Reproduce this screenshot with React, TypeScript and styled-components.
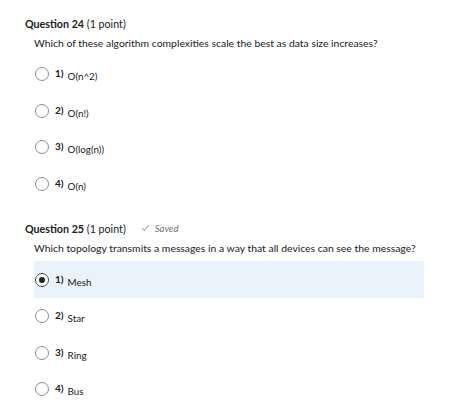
import styled, { createGlobalStyle } from "styled-components";

const GlobalStyle = createGlobalStyle`
  html, body {
    margin: 0;
    padding: 0;
    background: #ffffff;
  }
  body {
    font-family: Lato, "Liberation Sans", sans-serif;
    color: #202122;
  }
`;

type Question = {
  num: number;
  text: string;
  saved?: boolean;
  selected?: number;
  options: string[];
};

const QUESTIONS: Question[] = [
  {
    num: 24,
    text: "Which of these algorithm complexities scale the best as data size increases?",
    options: ["O(n^2)", "O(n!)", "O(log(n))", "O(n)"],
  },
  {
    num: 25,
    text: "Which topology transmits a messages in a way that all devices can see the message?",
    saved: true,
    selected: 0,
    options: ["Mesh", "Star", "Ring", "Bus"],
  },
];

export default function App() {
  return (
    <Page>
      <GlobalStyle />
      {QUESTIONS.map((q) => (
        <QuestionBlock key={q.num}>
          <Header>
            <Title>
              <strong>Question {q.num}</strong> (1 point)
            </Title>
            {q.saved && (
              <SavedTag>
                <svg width="9" height="8" viewBox="0 0 9 8">
                  <path d="M1 4.2 L3.4 6.5 L8 1.2" fill="none" stroke="#a3a6aa" strokeWidth="1.1" />
                </svg>
                Saved
              </SavedTag>
            )}
          </Header>
          <Prompt>{q.text}</Prompt>
          <OptionList>
            {q.options.map((opt, i) => (
              <OptionRow key={opt} $selected={q.selected === i}>
                <Radio $checked={q.selected === i} />
                <OptNum>{i + 1})</OptNum>
                <OptText>{opt}</OptText>
              </OptionRow>
            ))}
          </OptionList>
        </QuestionBlock>
      ))}
    </Page>
  );
}

const Page = styled.div`
  padding: 15px 0 0 25px;
  width: 474px;
  box-sizing: border-box;
`;

const QuestionBlock = styled.section`
  margin-bottom: 18px;
`;

const Header = styled.div`
  display: flex;
  align-items: center;
  height: 16px;
`;

const Title = styled.h2`
  margin: 0;
  font-size: 10.7px;
  font-weight: 400;
  color: #202122;

  strong {
    font-weight: 700;
  }
`;

const SavedTag = styled.span`
  display: inline-flex;
  align-items: center;
  gap: 5px;
  margin-left: 15px;
  font-size: 9.5px;
  font-style: italic;
  color: #6e7176;
`;

const Prompt = styled.p`
  margin: 4px 0 0 9px;
  font-size: 10.4px;
  line-height: 16px;
  color: #202122;
`;

const OptionList = styled.div`
  display: flex;
  flex-direction: column;
  margin: 5px 0 0 9px;
  width: 390px;
`;

const OptionRow = styled.div<{ $selected: boolean }>`
  display: flex;
  align-items: center;
  height: 36.6px;
  padding-left: 1px;
  background: ${({ $selected }) => ($selected ? "#eaf2fc" : "transparent")};
`;

const Radio = styled.span<{ $checked: boolean }>`
  position: relative;
  width: 12px;
  height: 12px;
  border-radius: 50%;
  border: 1px solid ${({ $checked }) => ($checked ? "#494c4e" : "#8a8d91")};
  background: #fff;
  flex-shrink: 0;

  &::after {
    content: "";
    display: ${({ $checked }) => ($checked ? "block" : "none")};
    position: absolute;
    left: 3px;
    top: 3px;
    width: 6px;
    height: 6px;
    border-radius: 50%;
    background: #202122;
  }
`;

const OptNum = styled.span`
  margin-left: 6px;
  font-size: 10px;
  font-weight: 700;
  color: #202122;
  transform: translateY(-1px);
`;

const OptText = styled.span`
  margin-left: 4px;
  font-size: 9.8px;
  color: #202122;
  transform: translateY(2px);
`;
